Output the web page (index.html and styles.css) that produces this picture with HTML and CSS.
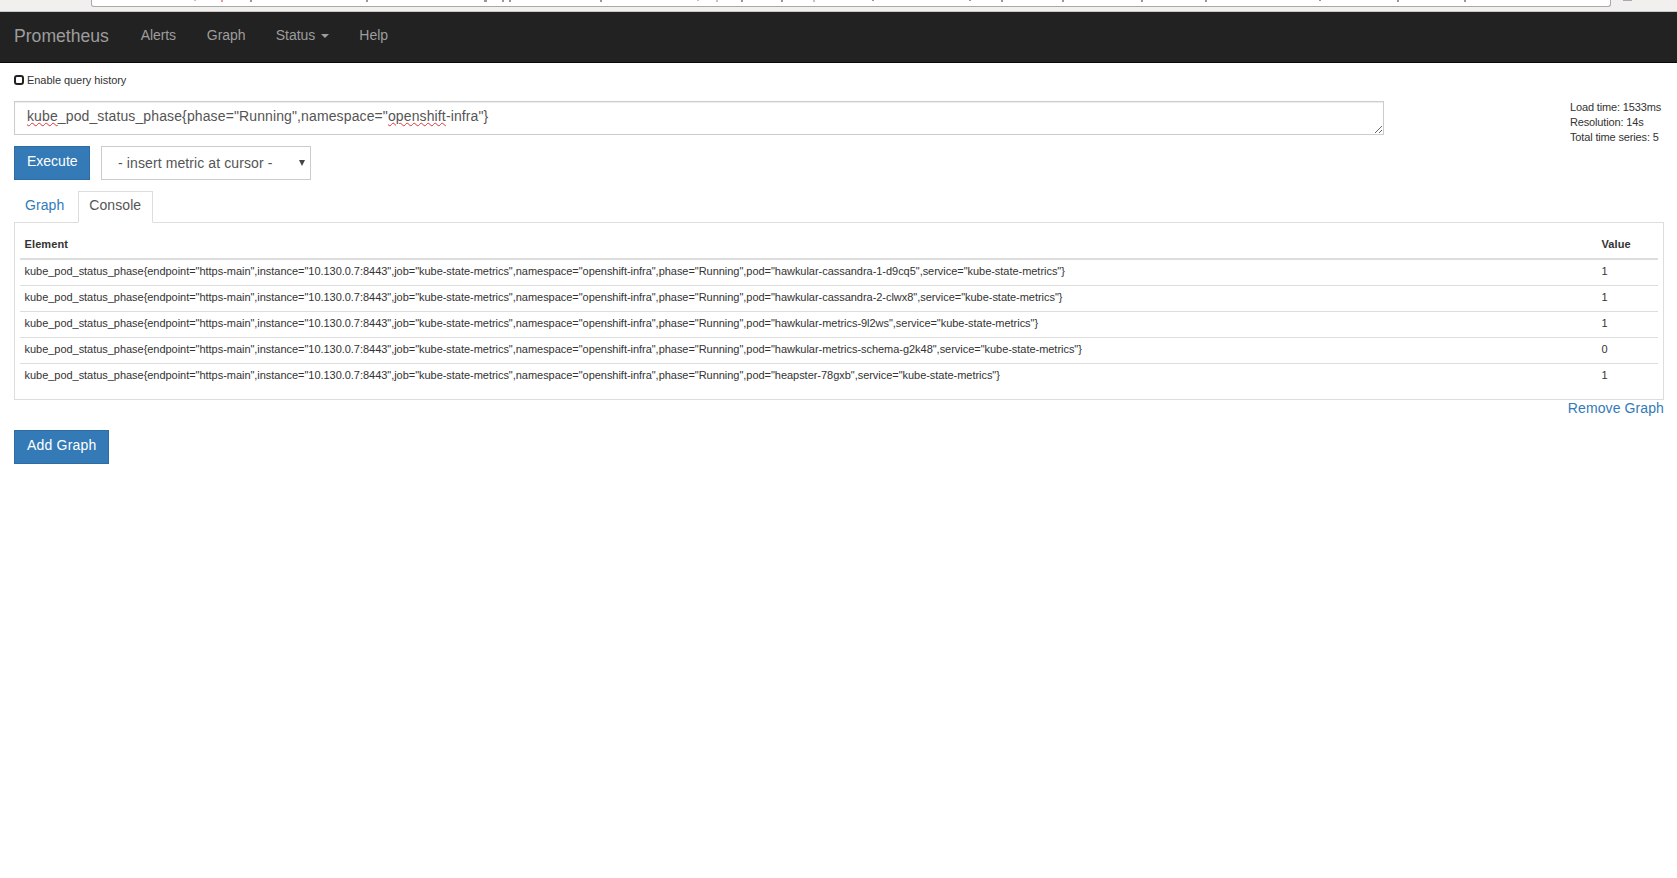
FILE: index.html
```html
<!DOCTYPE html>
<html lang="en">
<head>
<meta charset="utf-8">
<title>Prometheus Time Series Collection and Processing Server</title>
<link rel="stylesheet" href="styles.css">
</head>
<body>
<div class="browser-strip">
  <div class="url-box">
    <svg class="url-ticks" width="1518" height="2" viewBox="92 0 1518 2">
      <g stroke="#333" stroke-width="1">
        <path d="M251 0v2M367 0v2M503 0v2M510 0v2M601 0v2M742 0v2M782 0v2M873 0v1M970 0v1"/>
        <path d="M1002 0v2M1063 0v2M1142 0v2M1206 0v2M1320 0v1M1398 0v2M1465 0v2M484 1h3"/>
      </g>
      <path d="M222 0v2" stroke="#c0392b" stroke-width="1"/>
      <path d="M195 0v1M698 0v1M717 0v2M814 0v2" stroke="#888" stroke-width="1"/>
    </svg>
  </div>
  <div class="strip-icon"></div>
</div>

<nav class="navbar">
  <a class="brand" href="#">Prometheus</a>
  <ul class="nav-links">
    <li class="nav-alerts"><a href="#">Alerts</a></li>
    <li><a href="#">Graph</a></li>
    <li><a href="#">Status <span class="caret"></span></a></li>
    <li><a href="#">Help</a></li>
  </ul>
</nav>

<main class="page">
  <label class="history">
    <input class="history-check" type="checkbox">
    <span>Enable query history</span>
  </label>

  <div class="query-row">
    <div class="expression">
      <span class="misspelled">kube</span>_pod_status_phase{phase="Running",namespace="<span class="misspelled">openshift</span>-infra"}
      <svg class="grip" width="9" height="9" viewBox="0 0 9 9">
        <path d="M1 8L8 1M5 8L8 5" stroke="#666" stroke-width="1" fill="none"/>
      </svg>
    </div>
    <div class="eval-stats">
      <div>Load time: 1533ms</div>
      <div>Resolution: 14s</div>
      <div>Total time series: 5</div>
    </div>
  </div>

  <div class="action-row">
    <button class="btn btn-execute" type="button">Execute</button>
    <div class="metric-select">
      <select class="metric-input">
        <option>- insert metric at cursor -</option>
      </select>
    </div>
  </div>

  <ul class="tabs">
    <li class="tab"><a href="#">Graph</a></li>
    <li class="tab tab-active"><a href="#">Console</a></li>
  </ul>

  <div class="tab-panel">
    <table class="results">
      <thead>
        <tr><th>Element</th><th class="value-col">Value</th></tr>
      </thead>
      <tbody>
        <tr><td>kube_pod_status_phase{endpoint="https-main",instance="10.130.0.7:8443",job="kube-state-metrics",namespace="openshift-infra",phase="Running",pod="hawkular-cassandra-1-d9cq5",service="kube-state-metrics"}</td><td>1</td></tr>
        <tr><td>kube_pod_status_phase{endpoint="https-main",instance="10.130.0.7:8443",job="kube-state-metrics",namespace="openshift-infra",phase="Running",pod="hawkular-cassandra-2-clwx8",service="kube-state-metrics"}</td><td>1</td></tr>
        <tr><td>kube_pod_status_phase{endpoint="https-main",instance="10.130.0.7:8443",job="kube-state-metrics",namespace="openshift-infra",phase="Running",pod="hawkular-metrics-9l2ws",service="kube-state-metrics"}</td><td>1</td></tr>
        <tr><td>kube_pod_status_phase{endpoint="https-main",instance="10.130.0.7:8443",job="kube-state-metrics",namespace="openshift-infra",phase="Running",pod="hawkular-metrics-schema-g2k48",service="kube-state-metrics"}</td><td>0</td></tr>
        <tr><td>kube_pod_status_phase{endpoint="https-main",instance="10.130.0.7:8443",job="kube-state-metrics",namespace="openshift-infra",phase="Running",pod="heapster-78gxb",service="kube-state-metrics"}</td><td>1</td></tr>
      </tbody>
    </table>
  </div>

  <div class="remove-row"><a href="#">Remove Graph</a></div>

  <button class="btn add-graph" type="button">Add Graph</button>
</main>
</body>
</html>
```

FILE: styles.css
```css
* {
  box-sizing: border-box;
}

html,
body {
  margin: 0;
  padding: 0;
  background: #fff;
}

body {
  font-family: "Liberation Sans", Arial, sans-serif;
  font-size: 14px;
  line-height: 20px;
  color: #333;
  overflow: hidden;
}

a {
  color: #337ab7;
  text-decoration: none;
}

/* browser chrome sliver at the top */
.browser-strip {
  height: 12px;
  display: flex;
  align-items: flex-start;
  padding-left: 91px;
  background: #f1f0ee;
  border-bottom: 1px solid #c8c8c6;
}

.url-box {
  width: 1520px;
  height: 7px;
  background: #fff;
  border: 1px solid #a8a8a6;
  border-top: 0;
  border-radius: 0 0 3px 3px;
  overflow: hidden;
}

.url-ticks {
  display: block;
}

.strip-icon {
  width: 9px;
  height: 1px;
  margin-left: 12px;
  background: #aaa;
}

/* navbar */
.navbar {
  height: 51px;
  display: flex;
  background: #222;
  border-bottom: 1px solid #080808;
}

.brand {
  padding: 14px 17px 15px 14px;
  font-size: 17.6px;
  color: #9d9d9d;
}

.nav-links {
  display: flex;
  margin: 0;
  padding: 0;
  list-style: none;
}

.nav-links a {
  display: block;
  padding: 13px 15px 15px;
  color: #9d9d9d;
}

.nav-alerts {
  margin-right: 1px;
  letter-spacing: -0.15px;
}

.caret {
  display: inline-block;
  width: 0;
  height: 0;
  margin-left: 2px;
  vertical-align: middle;
  border-top: 4px solid #9d9d9d;
  border-left: 4px solid transparent;
  border-right: 4px solid transparent;
}

/* page */
.page {
  padding: 12px 13px 0 14px;
}

.history {
  display: flex;
  align-items: center;
  gap: 3px;
  height: 10px;
  font-size: 11px;
  line-height: 10px;
  letter-spacing: -0.05px;
}

.history-check {
  appearance: none;
  width: 10px;
  height: 10px;
  margin: 0;
  border: 2px solid #222;
  border-radius: 3px;
  background: #fff;
}

.query-row {
  display: flex;
  justify-content: space-between;
  height: 34px;
  margin-top: 16px;
}

.expression {
  position: relative;
  width: 1370px;
  height: 34px;
  padding: 4px 12px;
  font-size: 14px;
  line-height: 20px;
  letter-spacing: 0.12px;
  color: #555;
  background: #fff;
  border: 1px solid #ccc;
  box-shadow: inset 0 1px 1px rgba(0, 0, 0, 0.075);
}

.misspelled {
  text-decoration: underline wavy #e0343a 1px;
  text-underline-offset: 1px;
}

.grip {
  position: absolute;
  right: 0;
  bottom: 0;
}

.eval-stats {
  width: 94px;
  margin-top: -1px;
  font-size: 11px;
  line-height: 15px;
  letter-spacing: -0.15px;
  white-space: nowrap;
}

.action-row {
  display: flex;
  gap: 11px;
  margin-top: 11px;
}

.btn {
  height: 34px;
  padding: 0 12px 4px;
  font-family: inherit;
  font-size: 14px;
  line-height: 20px;
  color: #fff;
  background: #337ab7;
  border: 1px solid #2e6da4;
  border-radius: 0;
}

.btn-execute {
  padding-right: 11px;
}

.metric-select {
  position: relative;
  width: 210px;
  height: 34px;
}

.metric-select::after {
  content: "";
  position: absolute;
  top: 14px;
  right: 6px;
  border-top: 6px solid #444;
  border-left: 3px solid transparent;
  border-right: 3px solid transparent;
}

.metric-input {
  appearance: none;
  width: 100%;
  height: 100%;
  padding: 0 16.5px;
  font-family: inherit;
  font-size: 14px;
  letter-spacing: 0.1px;
  color: #555;
  background: #fff;
  border: 1px solid #ccc;
  border-radius: 0;
}

.tabs {
  display: flex;
  margin: 11px 0 0;
  padding: 0;
  list-style: none;
  letter-spacing: 0.08px;
}

.tab {
  height: 31px;
  padding: 4px 13.5px 5px 11px;
}

.tab-active {
  position: relative;
  height: 32px;
  margin-bottom: -1px;
  padding: 3px 10.5px;
  background: #fff;
  border: 1px solid #ddd;
  border-bottom-color: #fff;
}

.tab-active a {
  color: #555;
}

.tab-panel {
  padding: 10px 5px;
  border: 1px solid #ddd;
}

.results {
  width: 100%;
  border-collapse: collapse;
  font-size: 11px;
  line-height: 15px;
}

.results th {
  padding: 4px 5px 6px 4.5px;
  text-align: left;
  border-bottom: 2px solid #ddd;
  letter-spacing: 0.12px;
}

.results td {
  padding: 4px 5px 6px 4.5px;
  letter-spacing: -0.035px;
  border-top: 1px solid #ddd;
}

.results tbody tr:first-child td {
  border-top: 0;
}

.value-col {
  width: 61px;
}

.remove-row {
  margin-top: -2px;
  text-align: right;
  letter-spacing: 0.1px;
}

.add-graph {
  margin-top: 12px;
  padding: 0 11.5px 4px 12px;
  letter-spacing: 0.2px;
}
```
